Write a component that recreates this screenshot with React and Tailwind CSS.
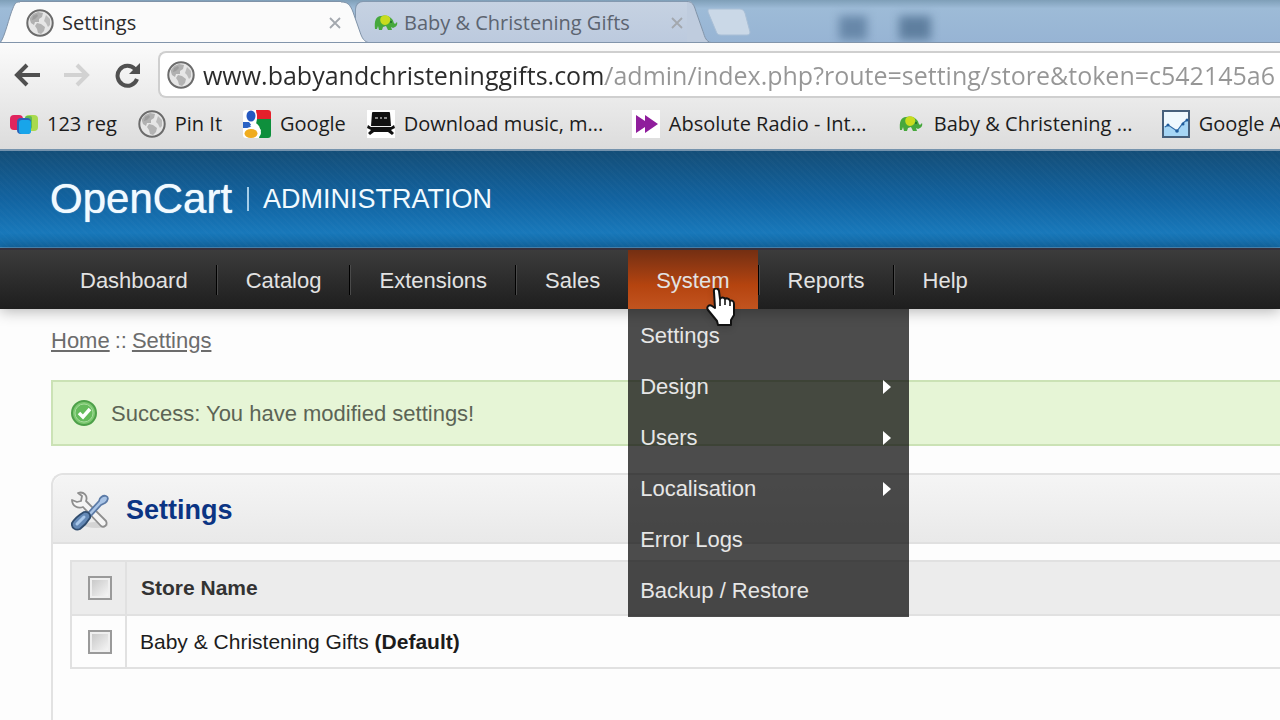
import { useState } from "react";

const GlobeIcon = () => (
  <svg viewBox="0 0 28 28" className="size-7 shrink-0" aria-hidden="true">
    <circle cx="14" cy="14" r="12.7" fill="#e6e6e6" stroke="#6b6b6b" strokeWidth="2" />
    <path d="M4 9 7 5l5-2 5 1-1 4-3 2 0 3-4 0-1 3-3-2-1-3z" fill="#b0b0b0" />
    <path d="m11 14 4 1 4 3-1 4-3 3-3-1-1-4-2-3z" fill="#b3b3b3" />
    <path d="m20 6 4 4 0 6-2 2-2-4-2-2z" fill="#bcbcbc" />
    <path d="M7 7l4-2 1 2-3 3-3 1z" fill="#9c9c9c" />
  </svg>
);

const ElephantIcon = () => (
  <svg viewBox="0 0 28 28" className="size-7 shrink-0" aria-hidden="true">
    <path d="M3 20c-1-8 1-13 6-13 3-1 8-1 11 3 2 2 1 4 3 5l2-2c1 3-1 5-4 6l-2-1 1 3h-4l-2-4-3 1-1 3H7l-1-4-1 3z" fill="#46a83c" />
    <path d="M9 8c3-3 8-2 9 1 1 4-2 7-5 7-4 0-6-5-4-8z" fill="#c8dc1e" />
    <circle cx="19" cy="13" r="1" fill="#1d6b25" />
  </svg>
);

const RegIcon = () => (
  <svg viewBox="0 0 28 28" className="size-7 shrink-0" aria-hidden="true">
    <rect x="0" y="5" width="13" height="15" rx="4" fill="#e0245e" />
    <rect x="15" y="5" width="13" height="16" rx="4" fill="#a9da4e" />
    <rect x="15" y="6" width="7" height="13" rx="2" fill="#5cba52" />
    <rect x="7" y="8" width="14" height="16" rx="4" fill="#2c62b8" />
    <rect x="9" y="10" width="12" height="14" rx="3" fill="#18a5ea" />
  </svg>
);

const GoogleIcon = () => (
  <svg viewBox="0 0 28 28" className="size-7 shrink-0" aria-hidden="true">
    <rect width="28" height="28" rx="3" fill="#fff" />
    <path d="M13 0h12a3 3 0 0 1 3 3v6H14z" fill="#e5202b" />
    <path d="M14 9h14v16a3 3 0 0 1-3 3H16l2-8-5-6z" fill="#0e8f3c" />
    <path d="M0 12h6l3 4-3 2H0z" fill="#2a62c4" />
    <circle cx="8" cy="6" r="6" fill="#fff" />
    <ellipse cx="8" cy="6" rx="4.500" ry="5.500" fill="#2458c0" />
    <ellipse cx="9" cy="23" rx="9" ry="6" fill="#fff" />
    <ellipse cx="8" cy="23.500" rx="6.500" ry="4.500" fill="#f0ac1e" />
    <path d="M10 12c4 1 7 4 7 8l-5-1-5-3z" fill="#fff" />
  </svg>
);

const PirateIcon = () => (
  <svg viewBox="0 0 28 28" className="size-7 shrink-0" aria-hidden="true">
    <rect width="28" height="28" fill="#fff" />
    <path d="M5 3q0-1 1-1h16q1 0 1 1l1 13H4z" fill="#111" />
    <path d="M8 7h3v2H8zm5 0h2v2h-2zm4 0h3v2h-3z" fill="#888" />
    <path d="m1 15 3 2h20l3-2 1 3-4 2 3 3-2 2-4-3H7l-4 3-2-2 3-3-4-2z" fill="#111" />
    <path d="M5 16h18v1H5z" fill="#eee" />
  </svg>
);

const RadioIcon = () => (
  <svg viewBox="0 0 28 28" className="size-7 shrink-0" aria-hidden="true">
    <rect width="28" height="28" fill="#fff" />
    <path d="M4 5l9 6V5l13 9-13 9v-6l-9 6z" fill="#8f1d9c" />
  </svg>
);

const AnalyticsIcon = () => (
  <svg viewBox="0 0 28 28" className="size-7 shrink-0" aria-hidden="true">
    <rect x="1" y="1" width="26" height="26" fill="#eef8fe" stroke="#46607c" strokeWidth="2" />
    <path d="m2 16 4 0 9 5 6-8 5-3v16H2z" fill="#a6d6f5" />
    <path d="m3 17 3-2 9 6 6-8 4-3" fill="none" stroke="#2e6ba8" strokeWidth="1.200" />
    <g fill="#1f5c9c">
      <circle cx="6" cy="15" r="1.500" />
      <circle cx="15" cy="21" r="1.800" />
      <circle cx="21" cy="14" r="1.500" />
      <circle cx="25" cy="10" r="1.500" />
    </g>
  </svg>
);

const ToolsIcon = () => (
  <svg viewBox="0 0 38 40" className="h-10 w-[38px] shrink-0" aria-hidden="true">
    <ellipse cx="25" cy="34" rx="12" ry="3" fill="#d4d4d4" />
    <path
      d="M7 2c6-2 10 3 8 8l20 20c2 4-2 7-5 5L12 16c-5 2-11-1-11-7l5 2 4-1 1-5z"
      fill="#f5f5f5"
      stroke="#8e8e8e"
      strokeWidth="1.800"
      strokeLinejoin="round"
    />
    <path d="M28 10c0-3 4-6 7-5s2 5-1 7l-4 2-11 12-3-3z" fill="#a9c4e6" stroke="#5b7aa6" strokeWidth="1.800" strokeLinejoin="round" />
    <path d="M13 21c4-1 7 2 6 6-3 5-6 8-10 11-4 2-9-1-8-6 3-5 7-8 12-11z" fill="#6388b5" stroke="#2f4c6e" strokeWidth="1.800" />
    <path d="M13 26 6 33" stroke="#a9c8ea" strokeWidth="3" strokeLinecap="round" />
  </svg>
);

const SuccessIcon = () => (
  <svg viewBox="0 0 26 26" className="size-[26px] shrink-0" aria-hidden="true">
    <circle cx="13" cy="13" r="12" fill="#7cc870" stroke="#4da049" strokeWidth="2" />
    <circle cx="13" cy="13" r="9" fill="#65bb5c" stroke="#a5dc9b" strokeWidth="1" />
    <path d="m8 13 4 4 7-8" fill="none" stroke="#fff" strokeWidth="3.500" />
  </svg>
);

const HandCursor = () => (
  <svg viewBox="0 0 30 38" className="pointer-events-none absolute left-[78px] top-[38px] z-20 h-[38px] w-[30px] drop-shadow-md" aria-hidden="true">
    <path
      d="M8 4c-1-4 4-5 5-1l1 8c1-2 4-2 5 0 1-1 4-1 5 2 2-1 4 0 4 3v11l-3 5v5H12l-1-4L2 22c-2-3 1-6 4-4l3 2z"
      fill="#fff"
      stroke="#111"
      strokeWidth="2"
      strokeLinejoin="round"
    />
    <path d="M14 11v7m5-7v6m5-4v5" stroke="#222" strokeWidth="1.700" />
  </svg>
);

const bookmarks = [
  { label: "123 reg", Icon: RegIcon },
  { label: "Pin It", Icon: GlobeIcon },
  { label: "Google", Icon: GoogleIcon },
  { label: "Download music, m...", Icon: PirateIcon, truncated: true },
  { label: "Absolute Radio - Int...", Icon: RadioIcon, truncated: true },
  { label: "Baby & Christening ...", Icon: ElephantIcon, truncated: true },
  { label: "Google A", Icon: AnalyticsIcon },
];

const menuItems = ["Dashboard", "Catalog", "Extensions", "Sales", "System", "Reports", "Help"];

const systemItems = [
  { label: "Settings" },
  { label: "Design", sub: true },
  { label: "Users", sub: true },
  { label: "Localisation", sub: true },
  { label: "Error Logs" },
  { label: "Backup / Restore" },
];

const CloseButton = ({ label }) => (
  <button type="button" aria-label={label} className="ml-auto shrink-0">
    <svg viewBox="0 0 12 12" className="size-3">
      <path d="M1 1l10 10M11 1 1 11" stroke="#a3a8ae" strokeWidth="1.800" />
    </svg>
  </button>
);

const TabStrip = () => (
  <div className="relative flex h-[43px] items-end overflow-hidden border-b border-[#8295ab] bg-linear-to-b from-[#7f9fb8] via-[#9dbbd7] via-20% to-[#97b4d4]">
    <div className="relative z-10 -mb-px flex h-[42px] items-stretch">
      <svg viewBox="0 0 20 42" className="h-[42px] w-5" aria-hidden="true">
        <path d="M0 42C5 36 9 16 13 7c2-5 3-6 7-6v41z" fill="#fbfbfb" />
        <path d="M0 42C5 36 9 16 13 7c2-5 3-6 7-6" fill="none" stroke="#8093a8" />
      </svg>
      <div className="flex w-[321px] items-center gap-2 border-t border-[#8093a8] bg-[#fbfbfb] pl-1.5 text-[20px] text-[#2b2b2b]">
        <GlobeIcon />
        <span>Settings</span>
        <CloseButton label="Close Settings" />
      </div>
      <svg viewBox="0 0 30 42" className="h-[42px] w-[30px]" aria-hidden="true">
        <path d="M0 1c6 0 9 2 12 10l7 20c2 6 4 10 10 11H0z" fill="#fbfbfb" />
        <path d="M0 1c6 0 9 2 12 10l7 20c2 6 4 10 10 11" fill="none" stroke="#8093a8" />
      </svg>
    </div>
    <div className="-ml-4 flex h-[41px] items-stretch">
      <div className="flex w-[332px] items-center gap-1 rounded-tl-lg border-t border-l border-[#8499b0] bg-linear-to-b from-[#c6d2e2] to-[#bccade] pt-px pr-1 pl-4 text-[20px] text-[#5c6470]">
        <ElephantIcon />
        <span>Baby &amp; Christening Gifts</span>
        <CloseButton label="Close Baby & Christening Gifts" />
      </div>
      <svg viewBox="0 0 24 41" className="h-[41px] w-6" aria-hidden="true">
        <path d="M0 0c5 0 7 3 9 10l7 20c2 6 3 10 8 11H0z" fill="#bfccde" />
        <path d="M0 0.500c5 0 7 3 9 10l7 20c2 6 3 10 8 11" fill="none" stroke="#8093a8" />
      </svg>
    </div>
    <button type="button" aria-label="New tab" className="-ml-1 mb-1.5">
      <svg viewBox="0 0 44 28" className="h-7 w-11">
        <path d="M2 1h31c3 0 4 2 5 4l5 19c0 2-1 3-3 3H14c-3 0-4-1-5-4L1 4c0-2 0-3 1-3z" fill="#cad8e7" stroke="#a9bfd6" />
      </svg>
    </button>
    <div className="mb-0.5 ml-22 flex items-end gap-8" aria-hidden="true">
      <span className="h-6 w-7 bg-[#6888a9] blur-[5px]" />
      <span className="h-6 w-8 bg-[#5f7f9f] blur-[5px]" />
    </div>
  </div>
);

const Toolbar = () => {
  const [url, setUrl] = useState(
    "www.babyandchristeninggifts.com/admin/index.php?route=setting/store&token=c542145a6"
  );

  return (
    <div className="flex h-[59px] items-center pt-1 pl-[14px]">
      <button type="button" aria-label="Back">
        <svg viewBox="0 0 26 24" className="h-6 w-[26px]" fill="none" stroke="#505050" strokeWidth="4">
          <path d="M13 2 3 12l10 10M3 12h23" />
        </svg>
      </button>
      <button type="button" aria-label="Forward" className="ml-6">
        <svg viewBox="0 0 26 24" className="h-6 w-[26px]" fill="none" stroke="#d2d2d2" strokeWidth="4">
          <path d="m13 2 10 10-10 10M23 12H0" />
        </svg>
      </button>
      <button type="button" aria-label="Reload" className="ml-6">
        <svg viewBox="0 0 26 26" className="size-[26px]">
          <path d="M21 7a10 10 0 1 0 2 10" fill="none" stroke="#505050" strokeWidth="4" />
          <path d="M26 1v11H15z" fill="#505050" />
        </svg>
      </button>
      <label className="ml-[18px] flex h-[47px] min-w-0 flex-1 items-center gap-2 rounded-l-lg border-2 border-r-0 border-[#cfcfcf] bg-white pl-[7px]">
        <GlobeIcon />
        <input
          type="text"
          aria-label="Address"
          value={url}
          onChange={(e) => setUrl(e.target.value)}
          className="h-10 min-w-0 flex-1 bg-[linear-gradient(90deg,#2b2b2b_402px,#969696_402px)] bg-clip-text text-[25px] text-transparent caret-black outline-none"
        />
      </label>
    </div>
  );
};

const BookmarksBar = () => (
  <nav aria-label="Bookmarks" className="flex h-[47px] items-center gap-[21px] overflow-hidden pb-1 pl-2.5 text-[20px] whitespace-nowrap text-[#1c1c1c]">
    {bookmarks.map(({ label, Icon, truncated }) => (
      <a key={label} href="#" className={`flex shrink-0 items-center gap-[9px] ${truncated ? "w-[244px]" : ""}`}>
        <Icon />
        {label}
      </a>
    ))}
  </nav>
);

const SystemMenu = () => (
  <ul className="absolute top-full left-0 z-10 w-[281px] bg-black/70 py-px text-[#e6e6e6]">
    {systemItems.map((item) => (
      <li key={item.label}>
        <a href="#" className="flex h-[51px] items-center justify-between pr-[18px] pl-3">
          {item.label}
          {item.sub && (
            <svg viewBox="0 0 8 14" className="h-3.5 w-2" aria-hidden="true">
              <path d="M0 0l8 7-8 7z" fill="#fff" />
            </svg>
          )}
        </a>
      </li>
    ))}
  </ul>
);

const MainMenu = () => (
  <nav aria-label="Main" className="h-[61px] border-t-2 border-[#35303c] bg-linear-to-b from-[#3c3c3c] to-[#1e1e1e] pl-[52px] shadow-[0_2px_14px_rgba(0,0,0,0.3)]">
    <ul className="flex h-full text-[22px] text-[#e2e2e2]">
      {menuItems.map((item) => (
        <li key={item} className="relative flex items-center">
          {item === "System" ? (
            <>
              <a href="#" aria-haspopup="true" className="flex h-full items-center bg-linear-to-b from-[#742f12] via-[#b5440f] via-60% to-[#c2541f] px-7 pt-0.5">
                {item}
              </a>
              <SystemMenu />
              <HandCursor />
            </>
          ) : (
            <a href="#" className="px-7 pt-0.5">
              {item}
            </a>
          )}
          {item !== "Sales" && item !== "Help" && (
            <span className="h-[30px] w-0.5 border-l border-r border-l-black border-r-[#4a4a4a]" />
          )}
        </li>
      ))}
    </ul>
  </nav>
);

const Header = () => (
  <header className="flex h-[99px] items-center border-t-2 border-b border-t-[#7593ad] border-b-[#4d8dbd] bg-[repeating-linear-gradient(45deg,rgba(255,255,255,0.015)_0_2px,transparent_2px_5px),linear-gradient(to_bottom,#144e78,#1263a0_50%,#1878ba_85%,#146ba8)] pl-[50px] text-[#f1faff]">
    <span className="text-[42px] leading-[48px] [text-shadow:0_0_1px_#f1faff]">OpenCart</span>
    <span className="mr-3.5 ml-[15px] h-6 w-0.5 bg-[#a5cde8]" />
    <span className="text-[27px]">ADMINISTRATION</span>
  </header>
);

const Checkbox = ({ label }) => (
  <input
    type="checkbox"
    aria-label={label}
    className="block size-6 appearance-none border-2 border-[#9a9a9a] bg-linear-to-br from-[#c4c4c4] to-[#fafafa] shadow-[inset_0_0_0_2px_#efefef] checked:bg-[#7c9cc0]"
  />
);

const StoreTable = () => (
  <table className="w-full border-collapse text-left text-[21px]">
    <thead>
      <tr className="h-[54px] bg-[#ececec] text-[#333]">
        <th className="w-[55px] border-2 border-[#e1e1e1] pl-4">
          <Checkbox label="Select all stores" />
        </th>
        <th className="border-y-2 border-[#e1e1e1] pl-[14px] font-bold">Store Name</th>
      </tr>
    </thead>
    <tbody>
      <tr className="h-[53px] text-[#1c1c1c]">
        <td className="border-2 border-[#e1e1e1] pl-4">
          <Checkbox label="Select Baby & Christening Gifts" />
        </td>
        <td className="border-y-2 border-[#e1e1e1] pl-[13px]">
          Baby &amp; Christening Gifts <b>(Default)</b>
        </td>
      </tr>
    </tbody>
  </table>
);

const App = () => {
  return (
    <div className="flex min-h-screen flex-col overflow-hidden bg-[#fdfdfd] font-['Liberation_Sans',Arial,sans-serif]">
      <div className="font-['Open_Sans','Noto_Sans',sans-serif]">
        <TabStrip />
        <div className="bg-linear-to-b from-[#fbfbfb] to-[#dcdcdc]">
          <Toolbar />
          <BookmarksBar />
        </div>
      </div>
      <Header />
      <MainMenu />
      <main className="flex flex-1 flex-col pl-[51px]">
        <div className="mt-[15px] flex h-8 items-center gap-[5px] text-[22px] text-[#6c6c6c]">
          <a href="#" className="underline">
            Home
          </a>
          <span>::</span>
          <a href="#" className="underline">
            Settings
          </a>
        </div>
        <div className="mt-6 flex h-[66px] items-center gap-[14px] border-2 border-r-0 border-[#cbe2b5] bg-[#e6f5d6] pl-[18px] text-[22px] text-[#5c6455]">
          <SuccessIcon />
          Success: You have modified settings!
        </div>
        <section className="mt-[27px] flex-1 rounded-tl-xl border-2 border-r-0 border-b-0 border-[#e2e2e2]">
          <div className="flex h-[69px] items-center gap-[17px] rounded-tl-xl border-b-2 border-[#e0e0e0] bg-linear-to-b from-[#f5f5f5] to-[#e9e9e9] pt-1 pl-[18px]">
            <ToolsIcon />
            <h1 className="text-[27px] font-bold text-[#0b3483]">Settings</h1>
          </div>
          <div className="pt-4 pl-[17px]">
            <StoreTable />
          </div>
        </section>
      </main>
    </div>
  );
};

export default App;
